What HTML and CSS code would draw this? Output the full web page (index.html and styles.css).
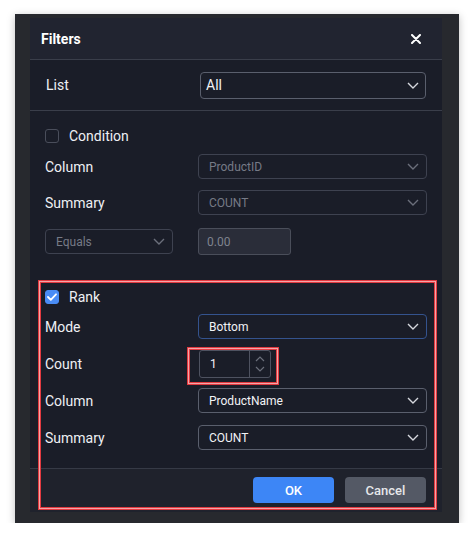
FILE: index.html
```html
<!DOCTYPE html>
<html>
<head>
<meta charset="utf-8">
<link rel="stylesheet" href="styles.css">
</head>
<body>
<div class="backdrop">
  <div class="dialog">
    <div class="header">
      <span class="title">Filters</span>
      <svg class="close" width="10" height="10" viewBox="0 0 10 10"><path d="M1 1L9 9M9 1L1 9" stroke="#ffffff" stroke-width="2" stroke-linecap="round"/></svg>
    </div>
    <div class="list-section">
      <span class="label list-label">List</span>
      <div class="select list-select"><span>All</span>
        <svg class="chev" width="12" height="7" viewBox="0 0 12 7"><path d="M1 1l5 5 5-5" fill="none" stroke="#d6d8de" stroke-width="1.4"/></svg>
      </div>
    </div>
    <div class="body">
      <div class="row check-row cond-row">
        <span class="checkbox"></span><span class="label">Condition</span>
      </div>
      <div class="row field-row r-col1">
        <span class="label">Column</span>
        <div class="select disabled"><span>ProductID</span>
          <svg class="chev" width="12" height="7" viewBox="0 0 12 7"><path d="M1 1l5 5 5-5" fill="none" stroke="#6b6f7b" stroke-width="1.4"/></svg>
        </div>
      </div>
      <div class="row field-row r-sum1">
        <span class="label">Summary</span>
        <div class="select disabled"><span>COUNT</span>
          <svg class="chev" width="12" height="7" viewBox="0 0 12 7"><path d="M1 1l5 5 5-5" fill="none" stroke="#6b6f7b" stroke-width="1.4"/></svg>
        </div>
      </div>
      <div class="row eq-row">
        <div class="select disabled eq-select"><span>Equals</span>
          <svg class="chev" width="12" height="7" viewBox="0 0 12 7"><path d="M1 1l5 5 5-5" fill="none" stroke="#6b6f7b" stroke-width="1.4"/></svg>
        </div>
        <div class="value-input">0.00</div>
      </div>
      <div class="row check-row rank-row">
        <span class="checkbox checked">
          <svg width="10" height="8" viewBox="0 0 10 8"><path d="M1 4l2.8 2.8L9 1.3" fill="none" stroke="#ffffff" stroke-width="1.8" stroke-linecap="round" stroke-linejoin="round"/></svg>
        </span><span class="label">Rank</span>
      </div>
      <div class="row field-row r-mode">
        <span class="label">Mode</span>
        <div class="select focused"><span>Bottom</span>
          <svg class="chev" width="12" height="7" viewBox="0 0 12 7"><path d="M1 1l5 5 5-5" fill="none" stroke="#d6d8de" stroke-width="1.4"/></svg>
        </div>
      </div>
      <div class="row field-row r-count">
        <span class="label">Count</span>
        <div class="count-input">
          <span class="count-val">1</span>
          <span class="spinner">
            <svg width="10" height="18" viewBox="0 0 10 18"><path d="M1 6l4-4 4 4M1 12l4 4 4-4" fill="none" stroke="#6b6f7b" stroke-width="1.2"/></svg>
          </span>
        </div>
      </div>
      <div class="row field-row r-col2">
        <span class="label">Column</span>
        <div class="select"><span>ProductName</span>
          <svg class="chev" width="12" height="7" viewBox="0 0 12 7"><path d="M1 1l5 5 5-5" fill="none" stroke="#d6d8de" stroke-width="1.4"/></svg>
        </div>
      </div>
      <div class="row field-row r-sum2">
        <span class="label">Summary</span>
        <div class="select"><span>COUNT</span>
          <svg class="chev" width="12" height="7" viewBox="0 0 12 7"><path d="M1 1l5 5 5-5" fill="none" stroke="#d6d8de" stroke-width="1.4"/></svg>
        </div>
      </div>
    </div>
    <div class="footer">
      <button class="btn ok">OK</button>
      <button class="btn cancel">Cancel</button>
    </div>
    <div class="mark mark-rank"></div>
    <div class="mark mark-count"></div>
  </div>
</div>
</body>
</html>
```

FILE: styles.css
```css
html, body {
  margin: 0;
  padding: 0;
  background: #ffffff;
}
body {
  font-family: Roboto, "Liberation Sans", sans-serif;
  font-size: 14px;
  color: #eef0f4;
}
.backdrop {
  margin: 14px 0 0 15px;
  width: 444px;
  height: 509px;
  background: #27292e;
  box-shadow: 0 2px 8px rgba(0, 0, 0, 0.25);
  padding: 4px 0 0 15px;
  box-sizing: border-box;
}
.dialog {
  position: relative;
  width: 412px;
  height: 494px;
  background: #1a1d28;
  display: flex;
  flex-direction: column;
}
.header {
  height: 42px;
  flex: none;
  background: #212430;
  border-bottom: 1px solid #3a3e4a;
  display: flex;
  align-items: center;
  justify-content: space-between;
  padding: 1px 21px 0 11px;
  box-sizing: border-box;
}
.title {
  font-weight: 700;
  color: #ffffff;
  font-size: 14px;
}
.close {
  display: block;
}
.list-section {
  flex: none;
  height: 51px;
  border-bottom: 1px solid #3a3e4a;
  display: flex;
  align-items: center;
  padding: 0 16px 0 16px;
  box-sizing: border-box;
  justify-content: space-between;
}
.list-section .list-select {
  width: 226px;
  height: 27px;
}
.label {
  color: #eef0f4;
  font-size: 14px;
}
.body {
  flex: 1;
  padding: 12px 15px 0 15px;
}
.row {
  display: flex;
  align-items: center;
  height: 25px;
}
.field-row {
  justify-content: space-between;
}
.check-row .label {
  margin-left: 10px;
}
.cond-row { margin-top: 0; }
.r-col1 { margin-top: 6px; }
.r-sum1 { margin-top: 11px; }
.eq-row { margin-top: 13px; height: 27px; justify-content: space-between; }
.rank-row { margin-top: 29px; height: 25px; }
.r-mode { margin-top: 5px; }
.r-count { margin-top: 11px; height: 28px; }
.r-col2 { margin-top: 10px; }
.r-sum2 { margin-top: 12px; }

.checkbox {
  width: 14px;
  height: 14px;
  box-sizing: border-box;
  border: 1px solid #4a4e5b;
  border-radius: 3px;
  display: flex;
  align-items: center;
  justify-content: center;
}
.checkbox.checked {
  background: #4a8cf5;
  border-color: #4a8cf5;
}
.select {
  width: 229px;
  height: 25px;
  box-sizing: border-box;
  border: 1px solid #5a5f6d;
  border-radius: 4px;
  display: flex;
  align-items: center;
  justify-content: space-between;
  padding: 0 5px 0 10px;
  font-size: 12px;
  color: #f2f3f6;
}
.list-select {
  font-size: 14px;
  padding-left: 5px;
  padding-right: 4px;
}
.select.disabled {
  border-color: #3e4250;
  color: #767a86;
}
.select.focused {
  border-color: #34538e;
}
.eq-select {
  width: 128px;
}
.chev {
  display: block;
  margin-right: 2px;
}
.value-input {
  width: 93px;
  height: 27px;
  box-sizing: border-box;
  margin-right: 136px;
  background: #2a2d39;
  border: 1px solid #4a4e5a;
  border-radius: 3px;
  color: #7f838e;
  font-size: 12px;
  display: flex;
  align-items: center;
  padding-left: 8px;
}
.count-input {
  width: 72px;
  height: 28px;
  box-sizing: border-box;
  margin-right: 156px;
  border: 1px solid #4e5260;
  border-radius: 3px;
  display: flex;
  align-items: stretch;
}
.count-val {
  flex: 1;
  display: flex;
  align-items: center;
  padding-left: 10px;
  font-size: 12px;
  color: #f2f3f6;
}
.spinner {
  width: 20px;
  border-left: 1px solid #4e5260;
  display: flex;
  align-items: center;
  justify-content: center;
}
.footer {
  flex: none;
  height: 44px;
  border-top: 1px solid #363a46;
  background: #1f222c;
  display: flex;
  align-items: flex-start;
  justify-content: flex-end;
  gap: 11px;
  padding: 8px 16px 0 0;
  box-sizing: border-box;
}
.btn {
  width: 81px;
  height: 26px;
  border: none;
  border-radius: 4px;
  font-family: Roboto, "Liberation Sans", sans-serif;
  font-size: 13px;
  font-weight: 500;
  color: #ffffff;
  padding: 0;
}
.ok {
  background: #3d86f6;
}
.cancel {
  background: #545965;
  color: #e6e7ea;
}
.mark {
  position: absolute;
  box-sizing: border-box;
  border: 1px solid #e23a40;
  box-shadow: inset 0 0 0 1px #f2a5a8, inset 0 0 0 2px #e23a40;
  pointer-events: none;
}
.mark-rank {
  left: 8px;
  top: 262px;
  width: 399px;
  height: 230px;
}
.mark-count {
  left: 157px;
  top: 329px;
  width: 92px;
  height: 38px;
}
```
